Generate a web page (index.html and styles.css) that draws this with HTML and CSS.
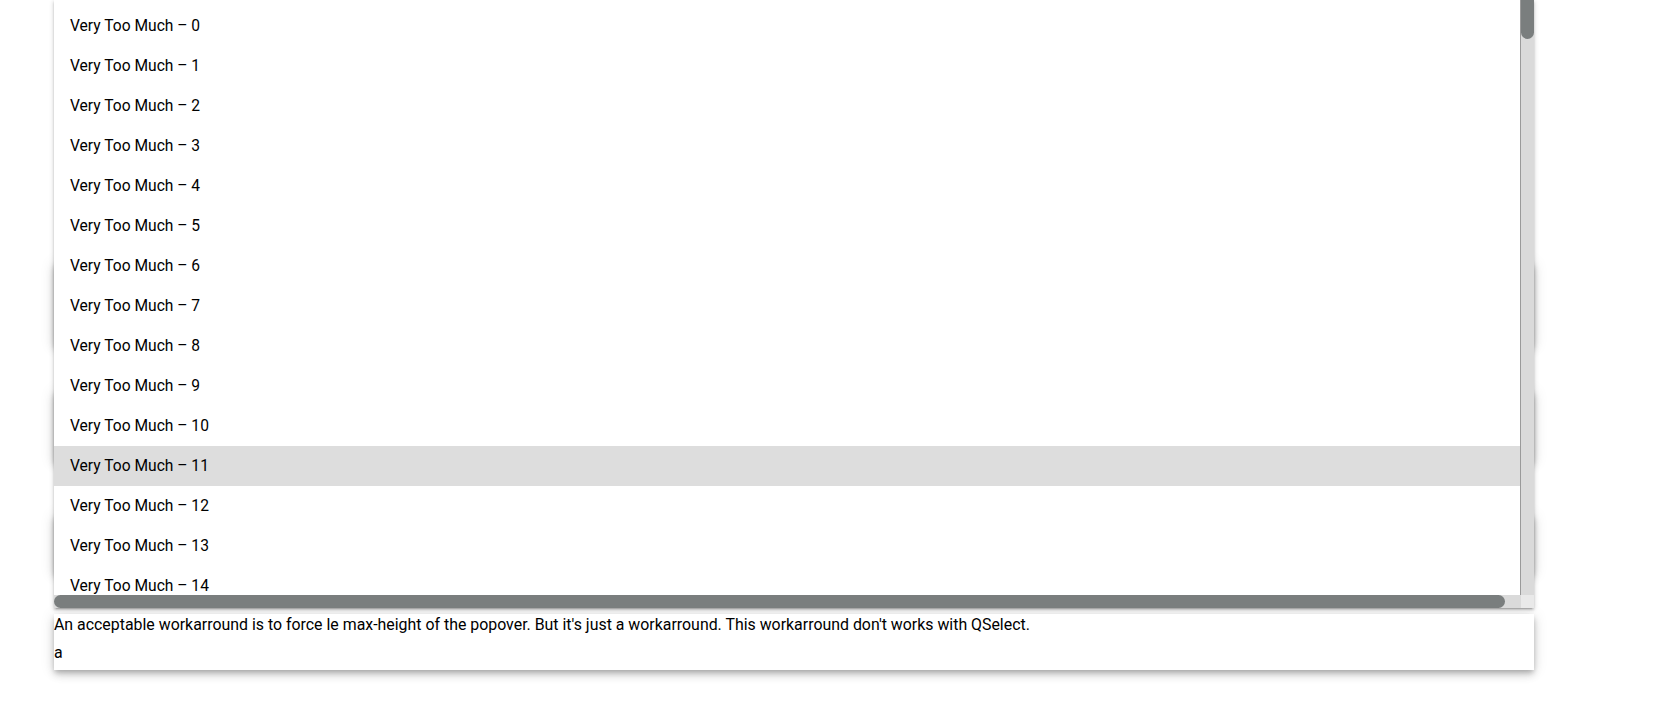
FILE: index.html
```html
<!DOCTYPE html>
<html>
<head>
<meta charset="utf-8">
<link rel="stylesheet" href="styles.css">
</head>
<body>
<div class="page">
  <div class="card card-a"></div>
  <div class="card card-b"></div>
  <div class="card card-c"></div>
  <div class="card card-d">
    <div class="note">An acceptable workarround is to force le max-height of the popover. But it's just a workarround. This workarround don't works with QSelect.</div>
    <div class="value">a</div>
  </div>

  <div class="menu">
    <div class="menu-list">
      <div class="item">Very Too Much – 0</div>
      <div class="item">Very Too Much – 1</div>
      <div class="item">Very Too Much – 2</div>
      <div class="item">Very Too Much – 3</div>
      <div class="item">Very Too Much – 4</div>
      <div class="item">Very Too Much – 5</div>
      <div class="item">Very Too Much – 6</div>
      <div class="item">Very Too Much – 7</div>
      <div class="item">Very Too Much – 8</div>
      <div class="item">Very Too Much – 9</div>
      <div class="item">Very Too Much – 10</div>
      <div class="item item-active">Very Too Much – 11</div>
      <div class="item">Very Too Much – 12</div>
      <div class="item">Very Too Much – 13</div>
      <div class="item">Very Too Much – 14</div>
    </div>
    <div class="vbar"><div class="vthumb"></div></div>
    <div class="hbar"><div class="hthumb"></div></div>
    <div class="corner"></div>
  </div>
</div>
</body>
</html>
```

FILE: styles.css
```css
html, body {
  margin: 0;
  padding: 0;
  background: #ffffff;
}
body {
  font-family: Roboto, "Liberation Sans", sans-serif;
  font-size: 15.9px;
  color: #000;
  width: 1670px;
  height: 707px;
  overflow: hidden;
}
.page {
  position: relative;
  width: 1480px;
  margin-left: 54px;
  padding-top: 262px;
  display: flex;
  flex-direction: column;
}
.card {
  background: #fff;
  box-shadow: 0 3px 5px -1px rgba(0,0,0,0.2), 0 5px 8px rgba(0,0,0,0.14), 0 1px 14px rgba(0,0,0,0.12);
}
.card-a { height: 84px; }
.card-b { height: 72px; margin-top: 44px; }
.card-c { height: 60px; margin-top: 52px; }
.card-d {
  margin-top: 40px;
  height: 56px;
  display: flex;
  flex-direction: column;
}
.note {
  height: 22px;
  line-height: 22px;
}
.value {
  margin-top: 6px;
  height: 22px;
  line-height: 22px;
}
.menu {
  position: absolute;
  left: 0;
  top: 0;
  width: 1480px;
  height: 608px;
  background: #fff;
  display: grid;
  grid-template-columns: 1fr 13px;
  grid-template-rows: 1fr 13px;
  overflow: hidden;
  box-shadow: 0 1px 5px rgba(0,0,0,0.2), 0 2px 2px rgba(0,0,0,0.14), 0 3px 1px -2px rgba(0,0,0,0.12);
}
.menu-list {
  padding-top: 6px;
  overflow: hidden;
  border-right: 1px solid #9a9a9a;
}
.item {
  height: 40px;
  line-height: 40px;
  padding-left: 16px;
  font-size: 15.6px;
  white-space: nowrap;
}
.item-active {
  background: #dddddd;
}
.vbar {
  background: #dadada;
  display: flex;
  flex-direction: column;
}
.vthumb {
  height: 39px;
  background: #7a7e7e;
  border-radius: 0 0 7px 7px;
}
.hbar {
  background: #dadada;
  display: flex;
}
.hthumb {
  width: 1451px;
  height: 13px;
  background: #7a7e7e;
  border-radius: 7px;
}
.corner {
  background: #e9e9e9;
}
```
